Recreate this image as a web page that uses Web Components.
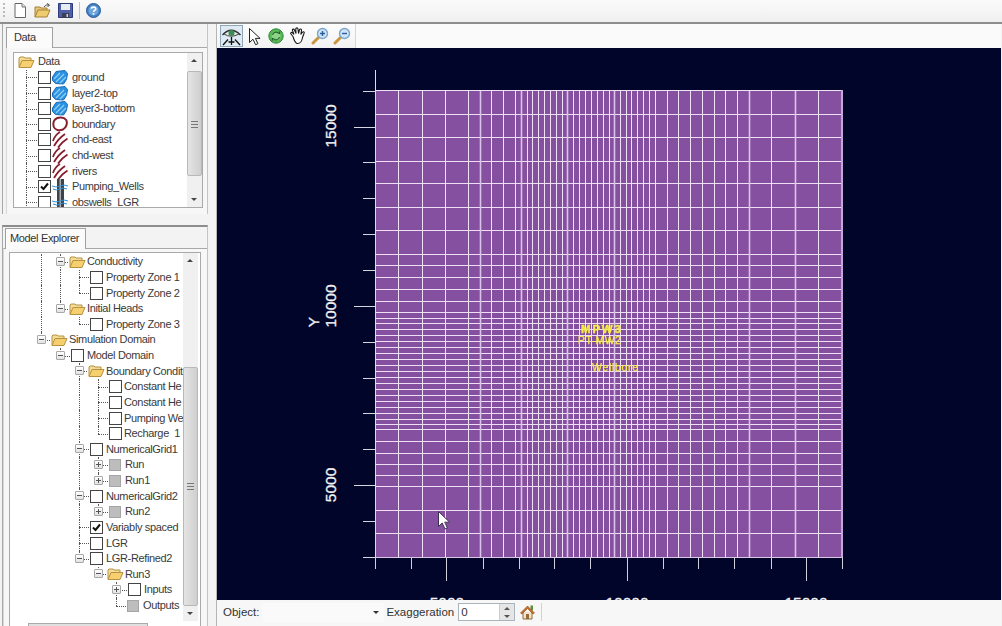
<!DOCTYPE html>
<html>
<head>
<meta charset="utf-8">
<style>
  html, body { margin: 0; height: 100%; overflow: hidden; background: #f3f3f3; }
  body { font: 11px "Liberation Sans", Arial, sans-serif; letter-spacing: -.35px; color: #3a3a3a; }
</style>
</head>
<body>
<app-shell>
  <main-toolbar slot="top"></main-toolbar>

  <side-pane slot="left" label="Data" style="--h:190px;--pt:3px;--tab-x:3px;--tab-pad:0 16px 0 7px;--body-x:3px;--pad:4px 4px 4px 6px;--bt:0">
    <tree-view style="--tree-h:156px;--bar-r:0px;--thumb-top:18px;--thumb-h:105px;--grip:49px">
      <tree-row at="4" gap="3" kind="folder">Data</tree-row>
      <tree-row line="12" at="24" kind="check" icon="blob">ground</tree-row>
      <tree-row line="12" at="24" kind="check" icon="blob">layer2-top</tree-row>
      <tree-row line="12" at="24" kind="check" icon="blob">layer3-bottom</tree-row>
      <tree-row line="12" at="24" kind="check" icon="ring">boundary</tree-row>
      <tree-row line="12" at="24" kind="check" icon="hatch">chd-east</tree-row>
      <tree-row line="12" at="24" kind="check" icon="hatch">chd-west</tree-row>
      <tree-row line="12" at="24" kind="check" icon="hatch">rivers</tree-row>
      <tree-row line="12" at="24" kind="checked" icon="well">Pumping_Wells</tree-row>
      <tree-row line="12" at="24" kind="check" icon="well">obswells_LGR</tree-row>
    </tree-view>
  </side-pane>

  <side-pane slot="left" label="Model Explorer" style="--h:401px;--pt:1px;--tab-x:2px;--tab-pad:0 6px 0 4px;--body-x:0px;--pad:3px 6px 0 5px;--bt:2px;margin-top:11px">
    <tree-view hbar style="--tree-h:375px;--bar-r:2px;--thumb-top:114px;--thumb-h:239px;--grip:115px">
      <tree-row guides="31" line="50" exp="-" at="59" kind="folder">Conductivity</tree-row>
      <tree-row guides="31 50" line="69" at="80" kind="check">Property Zone 1</tree-row>
      <tree-row guides="31 50" line="69" last at="80" kind="check">Property Zone 2</tree-row>
      <tree-row guides="31" line="50" last exp="-" at="59" kind="folder">Initial Heads</tree-row>
      <tree-row guides="31" line="69" last at="80" kind="check">Property Zone 3</tree-row>
      <tree-row line="31" last exp="-" at="41" kind="folder">Simulation Domain</tree-row>
      <tree-row line="50" last exp="-" at="61" kind="check">Model Domain</tree-row>
      <tree-row line="69" exp="-" at="78" kind="folder">Boundary Condit</tree-row>
      <tree-row guides="69" line="88" at="99" gap="2" kind="check">Constant He</tree-row>
      <tree-row guides="69" line="88" at="99" gap="2" kind="check">Constant He</tree-row>
      <tree-row guides="69" line="88" at="99" gap="2" kind="check">Pumping We</tree-row>
      <tree-row guides="69" line="88" last at="99" gap="2" kind="check">Recharge&nbsp; 1</tree-row>
      <tree-row line="69" exp="-" at="80" kind="check">NumericalGrid1</tree-row>
      <tree-row guides="69" line="88" exp="+" at="99" kind="grey">Run</tree-row>
      <tree-row guides="69" line="88" last exp="+" at="99" kind="grey">Run1</tree-row>
      <tree-row line="69" exp="-" at="80" kind="check">NumericalGrid2</tree-row>
      <tree-row guides="69" line="88" last exp="+" at="99" kind="grey">Run2</tree-row>
      <tree-row line="69" at="80" kind="checked">Variably spaced</tree-row>
      <tree-row line="69" at="80" kind="check">LGR</tree-row>
      <tree-row line="69" last exp="-" at="80" kind="check">LGR-Refined2</tree-row>
      <tree-row line="88" last exp="-" at="97" kind="folder">Run3</tree-row>
      <tree-row line="106" exp="+" at="118" kind="check">Inputs</tree-row>
      <tree-row line="106" last at="117" kind="grey">Outputs</tree-row>
    </tree-view>
  </side-pane>

  <plot-toolbar slot="main"></plot-toolbar>
  <plot-canvas slot="main"></plot-canvas>
  <status-bar slot="main"></status-bar>
</app-shell>

<script>
// shared little icons
const ICONS = {
  folder: `<svg width="17" height="14" viewBox="0 0 17 14"><path d="M1 12V3l1-1h4l1 1h6v2" fill="#f3dc9a" stroke="#b8913f"/><path d="M1 12.500L4 5.500h12l-3 7z" fill="#f6cf6e" stroke="#b8913f"/></svg>`,
  blob: `<svg width="16" height="15" viewBox="0 0 16 15"><path d="M.5 7L4 1.500 13 .5l2.500 3-1 6-3 4.500-8-.5-3-3z" fill="#2a92e0" stroke="#1a6cb8"/><path d="M2 9l6-6M4 12l8-8M8 13l6-6" stroke="#8fd0f5" stroke-width="1.200" fill="none"/></svg>`,
  ring: `<svg width="16" height="16" viewBox="0 0 16 16"><path d="M3 3.500C6 .5 12 1 14.200 4c1.500 3 .3 7.500-3.200 9.500C7 15 3 14 1.800 11 1 8 1.500 5 3 3.500z" fill="#fff" stroke="#86202f" stroke-width="2"/></svg>`,
  hatch: `<svg width="16" height="17" viewBox="0 0 16 17"><g fill="none" stroke="#86202f" stroke-width="1.800"><path d="M1 10Q3 4 8 1"/><path d="M2 15Q6 8 13 3"/><path d="M6 16.500Q10 11 15.500 7.500"/></g></svg>`,
  well: `<svg width="16" height="16" viewBox="0 0 16 16"><rect x="5" y="0" width="7" height="16" fill="#3f4347"/><rect x="7.500" y="0" width="1.500" height="16" fill="#a8adb1"/><path d="M0 7q4 2 8 0t8 0M1 10q4 2 7 0t7 0" stroke="#2c8fd8" fill="none"/></svg>`
};

const shellTemplate = document.createElement('template');
shellTemplate.innerHTML = `
  <style>
    :host { display: grid; grid-template-rows: 24px 602px; height: 626px; width: 1002px; overflow: hidden; }
    .work { display: flex; min-height: 0; }
    .left { flex: 0 0 216px; box-sizing: border-box; padding-left: 2px; display: flex; flex-direction: column; overflow: hidden; }
    .main { flex: 0 0 785px; border-left: 1px solid #b5b5b5; box-sizing: border-box; display: flex; flex-direction: column; overflow: hidden; }
  </style>
  <slot name="top"></slot>
  <div class="work">
    <div class="left"><slot name="left"></slot></div>
    <div class="main"><slot name="main"></slot></div>
  </div>`;
class AppShell extends HTMLElement {
  constructor() {
    super();
    this.attachShadow({ mode: 'open' }).appendChild(shellTemplate.content.cloneNode(true));
  }
}

const mainToolbarTemplate = document.createElement('template');
mainToolbarTemplate.innerHTML = `
  <style>
    :host { display: flex; align-items: center; box-sizing: border-box; height: 24px; padding: 0 0 2px 3px; background: linear-gradient(#fbfbfb, #efefef); border-bottom: 2px solid #8d8d8d; }
    .grip { width: 2px; height: 14px; border-left: 2px dotted #bbb; margin-right: 7px; }
    svg { display: block; }
    .sep { width: 1px; height: 17px; background: #c4c4c4; margin: 0 6px 0 6px; }
  </style>
  <div class="grip"></div>
  <svg width="12" height="15" viewBox="0 0 12 15" style="margin-right:8px"><path d="M1 .5h7l3.500 3.500v10.500H1z" fill="#fff" stroke="#666"/><path d="M8 .5V4h3.500" fill="#e4e4e4" stroke="#777"/></svg>
  <svg width="17" height="15" viewBox="0 0 17 15" style="margin-right:7px"><path d="M1 14V4h5l1 1h6v2" fill="#e2c47a" stroke="#a58238"/><path d="M1 14L4 7h12l-3 7z" fill="#efcb70" stroke="#a58238"/><path d="M10 4Q12 1 15 2M13 .5L15.500 2 13.500 4" fill="none" stroke="#4d4d4d"/></svg>
  <svg width="15" height="15" viewBox="0 0 15 15"><path d="M.5.5h14v14h-14z" fill="#4f5fa8" stroke="#2e3a78"/><rect x="3" y="1" width="9" height="6" fill="#e8ecf5"/><rect x="4" y="10" width="7" height="5" fill="#3a3f58"/><rect x="8.500" y="11" width="1.500" height="3" fill="#cfd3e2"/></svg>
  <div class="sep"></div>
  <svg width="15" height="15" viewBox="0 0 15 15"><circle cx="7.500" cy="7.500" r="7" fill="#3f7fc4" stroke="#2a5c9c"/><circle cx="7.500" cy="7.500" r="5" fill="#6ea6dc"/><path d="M5.300 5.800C5.500 3.500 9.800 3.500 9.800 5.800 9.800 7.500 7.500 7.300 7.500 9" fill="none" stroke="#fff" stroke-width="1.600"/><rect x="6.700" y="10" width="1.600" height="1.600" fill="#fff"/></svg>`;
class MainToolbar extends HTMLElement {
  constructor() {
    super();
    this.attachShadow({ mode: 'open' }).appendChild(mainToolbarTemplate.content.cloneNode(true));
  }
}

const sidePaneTemplate = document.createElement('template');
sidePaneTemplate.innerHTML = `
  <style>
    :host { display: block; box-sizing: border-box; flex: none; width: 206px; height: var(--h); padding-top: var(--pt); border-left: 1px solid #a8a8a8; border-right: 1px solid #c4c4c4; border-top: var(--bt) solid #8d8d8d; overflow: hidden; }
    .tab { display: inline-block; box-sizing: border-box; height: 21px; line-height: 18px; padding: var(--tab-pad); margin-left: var(--tab-x); background: #fbfbfb; border: 1px solid #a0a0a0; border-bottom: 0; position: relative; z-index: 1; color: #333; vertical-align: top; }
    .body { margin: -1px 0 0 var(--body-x); border-top: 1px solid #a8a8a8; border-left: 1px solid #d8d8d8; padding: var(--pad); background: #f7f7f7; height: 100%; box-sizing: border-box; }
  </style>
  <span class="tab"></span>
  <div class="body"><slot></slot></div>`;
class SidePane extends HTMLElement {
  constructor() {
    super();
    this.attachShadow({ mode: 'open' }).appendChild(sidePaneTemplate.content.cloneNode(true));
  }
  connectedCallback() {
    this.shadowRoot.querySelector('.tab').textContent = this.getAttribute('label');
  }
}

const treeViewTemplate = document.createElement('template');
treeViewTemplate.innerHTML = `
  <style>
    :host { display: flex; box-sizing: border-box; height: var(--tree-h); border: 1px solid #a9a9a9; background: #fff; position: relative; overflow: hidden; }
    .rows { flex: 1; min-width: 0; padding-top: 1px; overflow: hidden; }
    .bar { flex: 0 0 15px; margin-right: var(--bar-r); background: #f0f0f0; position: relative; }
    .arrow { position: absolute; left: 4px; width: 0; height: 0; border: 3.500px solid transparent; }
    .up { top: 6px; border-bottom-color: #444; border-top: 0; }
    .down { bottom: 6px; border-top-color: #444; border-bottom: 0; }
    .thumb { position: absolute; left: 0; right: 0; top: var(--thumb-top); height: var(--thumb-h); box-sizing: border-box; background: linear-gradient(90deg, #e4e4e4, #cfcfcf); border: 1px solid #b8b8b8; border-radius: 2px; }
    .grip { position: absolute; left: 3px; right: 3px; top: var(--grip); height: 7px; box-sizing: border-box; border-top: 1px solid #777; border-bottom: 1px solid #777; }
    .grip::after { content: ""; display: block; height: 1px; margin-top: 2px; background: #777; }
    .hthumb { display: none; position: absolute; left: 18px; width: 118px; bottom: 0; height: 2px; background: #e0e0e0; border: 1px solid #aaa; border-bottom: 0; }
    :host([hbar]) .hthumb { display: block; }
    :host([hbar]) .bar { margin-bottom: 5px; }
  </style>
  <div class="rows"><slot></slot></div>
  <div class="bar"><i class="arrow up"></i><div class="thumb"><div class="grip"></div></div><i class="arrow down"></i></div>
  <div class="hthumb"></div>`;
class TreeView extends HTMLElement {
  constructor() {
    super();
    this.attachShadow({ mode: 'open' }).appendChild(treeViewTemplate.content.cloneNode(true));
  }
}

const treeRowTemplate = document.createElement('template');
treeRowTemplate.innerHTML = `
  <style>
    :host { display: flex; align-items: center; height: 15.64px; position: relative; white-space: nowrap; color: #3a3a3a; }
    .g, .v, .h, .exp { position: absolute; }
    .g, .v { width: 0; border-left: 1px dotted #555; top: 0; bottom: 0; }
    .v.last { bottom: 50%; }
    .h { top: 50%; height: 0; border-top: 1px dotted #555; }
    .exp { top: 50%; margin-top: -5px; width: 9px; height: 9px; box-sizing: border-box; border: 1px solid #a8a8a8; border-radius: 1px; background: linear-gradient(#fff, #e2e2e2); text-align: center; }
    .exp::before { content: ""; position: absolute; left: 1px; right: 1px; top: 3px; height: 1px; background: #555; }
    .exp.plus::after { content: ""; position: absolute; top: 1px; bottom: 1px; left: 3px; width: 1px; background: #555; }
    .box { flex: none; width: 13px; height: 13px; box-sizing: border-box; border: 1px solid #444; background: #fff; position: relative; }
    .box svg { position: absolute; left: 0; top: 0; }
    .grey { flex: none; width: 12px; height: 12px; box-sizing: border-box; border: 1px solid #a5a5a5; background: #bdbdbd; }
    .ic { flex: none; display: block; line-height: 0; }
    .label { position: relative; top: -.5px; }
  </style>`;
class TreeRow extends HTMLElement {
  connectedCallback() {
    if (this.shadowRoot) return;
    const shadow = this.attachShadow({ mode: 'open' });
    shadow.appendChild(treeRowTemplate.content.cloneNode(true));
    const at = +this.getAttribute('at');
    const kind = this.getAttribute('kind');
    const icon = this.getAttribute('icon');
    const exp = this.getAttribute('exp');
    this.style.paddingLeft = at + 'px';
    let html = '';
    (this.getAttribute('guides') || '').split(' ').filter(Boolean).forEach(x => {
      html += `<i class="g" style="left:${x}px"></i>`;
    });
    if (this.hasAttribute('line')) {
      const x = +this.getAttribute('line');
      html += `<i class="v${this.hasAttribute('last') ? ' last' : ''}" style="left:${x}px"></i>`;
      html += `<i class="h" style="left:${x}px;width:${at - x - 1}px"></i>`;
      if (exp) html += `<i class="exp${exp === '+' ? ' plus' : ''}" style="left:${x - 4}px"></i>`;
    }
    let labelGap = 3;
    if (kind === 'folder') { html += `<span class="ic">${ICONS.folder}</span>`; labelGap = 1; }
    if (kind === 'check') html += `<span class="box"></span>`;
    if (kind === 'checked') html += `<span class="box"><svg width="11" height="11" viewBox="0 0 11 11"><path d="M2 5.500L4.500 8 9 2.500" fill="none" stroke="#111" stroke-width="2"/></svg></span>`;
    if (kind === 'grey') { html += `<span class="grey"></span>`; labelGap = 4; }
    if (icon) { html += `<span class="ic" style="margin-left:1px">${ICONS[icon]}</span>`; labelGap = 4; }
    if (this.hasAttribute('gap')) labelGap = +this.getAttribute('gap');
    html += `<span class="label" style="margin-left:${labelGap}px"><slot></slot></span>`;
    shadow.innerHTML += html;
  }
}

const plotToolbarTemplate = document.createElement('template');
plotToolbarTemplate.innerHTML = `
  <style>
    :host { display: flex; flex: none; height: 24px; background: #fafafa; }
    .tools { display: flex; align-items: center; width: 139px; box-sizing: border-box; padding-left: 3px; border-right: 1px solid #d6d6d6; background: linear-gradient(#fdfdfd, #f2f2f2); }
    .on { display: flex; align-items: center; justify-content: center; width: 23px; height: 22px; box-sizing: border-box; border: 1px solid #8fa6b8; background: #dfeaf3; }
    .t { display: flex; align-items: center; justify-content: center; width: 22px; height: 22px; }
  </style>
  <div class="tools">
    <div class="on"><svg width="21" height="19" viewBox="0 0 21 19"><path d="M1.500 8Q10 -1.500 19.500 8" fill="none" stroke="#333" stroke-width="1.400"/><path d="M3 7Q10 11.500 18 7" fill="#dfe8e0" stroke="#444"/><circle cx="10.500" cy="6" r="3" fill="#3d8a52"/><path d="M2 18L7 12.500M19 18L14 12.500M10.500 10v8M7.500 15h6" fill="none" stroke="#111" stroke-width="1.300"/></svg></div>
    <div class="t"><svg width="15" height="19" viewBox="0 0 15 19"><path d="M2.500 1.500v14l3.500-3.300 2.600 5.500 2.300-1-2.500-5.300h4.700z" fill="#fff" stroke="#222"/></svg></div>
    <div class="t"><svg width="16" height="16" viewBox="0 0 16 16"><circle cx="8" cy="8" r="7.200" fill="#58b558" stroke="#2d8a36"/><circle cx="8" cy="8" r="4.500" fill="#8ed488"/><path d="M4.500 7A3.700 3.700 0 0 1 11 5.500M9.500 4.800l2 .8.3-2.200M11.500 9A3.700 3.700 0 0 1 5 10.500M6.500 11.200l-2-.8-.3 2.200" fill="none" stroke="#1d5f28" stroke-width="1.100"/></svg></div>
    <div class="t"><svg width="18" height="18" viewBox="0 0 18 18"><path d="M4 9.500L2 7C1 6 2.500 4.800 3.500 5.800L5 7.500 3.500 3.500C3 2 5 1.500 5.500 3L7 6.500 6.800 2C6.800 .5 8.800 .5 9 2L9.500 6.500 10.500 2.800C11 1.500 12.800 2 12.500 3.300L11.800 7.500 13.500 5.200C14.500 4.200 15.800 5.300 15 6.500L13.500 10.500C13 14 11.500 16.500 8.500 16.500 6 16.500 5 13 4 9.500z" fill="#fff" stroke="#1a1a1a" stroke-width="1.100"/></svg></div>
    <div class="t"><svg width="18" height="18" viewBox="0 0 18 18"><path d="M7.500 10.500L2 16" stroke="#c9963f" stroke-width="3" stroke-linecap="round"/><circle cx="11.500" cy="6.500" r="5" fill="#cfe3f5" stroke="#7ca5cb" stroke-width="1.400"/><path d="M9 6.500h5M11.500 4v5" stroke="#2a5f9c" stroke-width="1.400"/></svg></div>
    <div class="t"><svg width="18" height="18" viewBox="0 0 18 18"><path d="M7.500 10.500L2 16" stroke="#c9963f" stroke-width="3" stroke-linecap="round"/><circle cx="11.500" cy="6.500" r="5" fill="#cfe3f5" stroke="#7ca5cb" stroke-width="1.400"/><path d="M9 6.500h5" stroke="#2a5f9c" stroke-width="1.400"/></svg></div>
  </div>`;
class PlotToolbar extends HTMLElement {
  constructor() {
    super();
    this.attachShadow({ mode: 'open' }).appendChild(plotToolbarTemplate.content.cloneNode(true));
  }
}

// grid line places read off the model picture
const GRID_X = [398.3,422,445.3,467.7,480,491.3,503.3,514.7,520.7,526.7,532.3,538.3,544,550,555.7,561.7,567.3,573.3,579,585,591,597,603,608.7,613.7,619.7,625.7,631.3,637.3,643,649,654.7,666.7,678.3,690.3,702,714,725.3,737.3,748.7,771,794.7,818.3];
const GRID_Y = [113.7,137.3,160.7,183.3,206.7,230.3,253.7,265.3,277.3,289,300.7,312.3,318.3,323.3,329.3,335.3,341.3,347.3,353.3,359.3,364.7,370.7,376.7,382.7,388.7,394.7,400.7,406.7,412.7,418.7,424.3,429,440.7,452.7,464.3,475,486.3,510,533.3];
const WIDE_X = [480,520.7,567.3,613.7,748.7,794.7];
const TICKS_Y = [90.7,126.7,162,198,234,269.5,305.5,341.7,377.7,413,449,485.3,521,557];
const MAJOR_Y = [126.7,305.5,485.3];
const TICKS_X = [375.3,411.3,446.3,482.7,519,554.3,590.3,626.7,663,698,734.3,770.7,805.7,842];
const MAJOR_X = [446.3,626.7,805.7];

class PlotCanvas extends HTMLElement {
  constructor() {
    super();
    const line = (x1, y1, x2, y2, c, w) => `<line x1="${x1}" y1="${y1}" x2="${x2}" y2="${y2}" stroke="${c}" stroke-width="${w || 1}"/>`;
    const px = v => Math.round(v) + 0.5;
    let g = `<rect x="375" y="90" width="467" height="467" fill="#84509f"/>`;
    GRID_Y.forEach(y => { g += line(375, px(y), 842, px(y), '#eedff4'); });
    GRID_X.forEach(x => {
      g += WIDE_X.includes(x) ? line(px(x), 90, px(x), 557, '#dcc3ea', 1.6) : line(px(x), 90, px(x), 557, '#f0e2f6');
    });
    g += line(375, 90.5, 842, 90.5, '#f0e2f5') + line(375, 557.5, 842, 557.5, '#dcc6e8') + line(842, 90, 842, 558, '#c5a8d8', 2);
    g += line(375.5, 70, 375.5, 558, '#dcdce6');
    TICKS_Y.forEach(y => { g += line(MAJOR_Y.includes(y) ? 354 : 363, px(y), 375, px(y), '#d6d6e2'); });
    TICKS_X.forEach(x => { g += line(px(x), 557, px(x), MAJOR_X.includes(x) ? 581 : 569, '#d0d0dc'); });
    const yLabel = (t, y) => `<text transform="translate(336 ${y}) rotate(-90)" text-anchor="middle">${t}</text>`;
    const xLabel = (t, x) => `<text x="${x}" y="608" text-anchor="middle">${t}</text>`;
    this.attachShadow({ mode: 'open' }).innerHTML = `
      <style>
        :host { display: block; flex: none; height: 552px; background: #01052a; overflow: hidden; }
        svg { display: block; }
        .axis { font: 15.5px "Liberation Sans", Arial, sans-serif; letter-spacing: 0; fill: #f2f2f2; stroke: #f2f2f2; stroke-width: .3px; }
        .well { font: 10.500px "Liberation Sans", Arial, sans-serif; fill: #f6ea4a; stroke: #f6ea4a; stroke-width: .25px; filter: blur(.25px); }
      </style>
      <svg width="784" height="552" viewBox="217 48 784 552">
        ${g}
        <g class="axis">
          ${yLabel('15000', 126)}${yLabel('10000', 306)}${yLabel('5000', 485)}
          <text transform="translate(319 322) rotate(-90)" text-anchor="middle">Y</text>
          ${xLabel('5000', 447)}${xLabel('10000', 627)}${xLabel('15000', 806)}
        </g>
        <g class="well">
          <text x="581" y="333" style="font-weight:bold;font-size:11.500px;letter-spacing:1.800px;stroke-width:.4px">MPW3</text>
          <text x="578" y="344" style="letter-spacing:.4px">PT-MW2</text>
          <text x="592" y="371" style="letter-spacing:.7px">Wellbore</text>
        </g>
        <path d="M438.500 511.500v15l3.700-3.500 2.800 6 2.400-1-2.700-5.800h5z" fill="#fff" stroke="#3a3050"/>
      </svg>`;
  }
}

const statusBarTemplate = document.createElement('template');
statusBarTemplate.innerHTML = `
  <style>
    :host { display: flex; flex: none; align-items: center; box-sizing: border-box; height: 26px; padding: 0 0 2px 6px; background: #f7f7f7; font-size: 11.5px; letter-spacing: 0; color: #333; }
    .combo { display: flex; align-items: center; justify-content: flex-end; width: 122px; height: 19px; margin-left: 3px; padding-right: 5px; box-sizing: border-box; background: #fafafa; }
    .combo i { width: 0; height: 0; border: 3px solid transparent; border-top: 3.500px solid #333; border-bottom: 0; }
    .spin { display: flex; align-items: center; justify-content: space-between; width: 57px; height: 18px; margin-left: 4px; box-sizing: border-box; border: 1px solid #a8b4c0; background: #fff; padding-left: 2px; }
    .btns { display: flex; flex-direction: column; width: 14px; height: 16px; background: #e6e6e6; border-left: 1px solid #ccc; align-items: center; justify-content: space-around; }
    .btns i { width: 0; height: 0; border: 3px solid transparent; }
    .btns .u { border-bottom: 3px solid #555; border-top: 0; }
    .btns .d { border-top: 3px solid #555; border-bottom: 0; }
    svg { margin-left: 5px; display: block; }
    .sep { width: 1px; height: 18px; background: #d2d2d2; margin-left: 6px; }
  </style>
  <span>Object:</span>
  <div class="combo"><i></i></div>
  <span style="margin-left:2px">Exaggeration</span>
  <div class="spin"><span>0</span><div class="btns"><i class="u"></i><i class="d"></i></div></div>
  <svg width="15" height="16" viewBox="0 0 15 16"><path d="M3 8v7h9V8" fill="#f2e5cf" stroke="#8a6a3c"/><rect x="6" y="10" width="3" height="5" fill="#9a6a34"/><rect x="10.500" y="1.500" width="2.500" height="5" fill="#5b8f3a"/><path d="M.5 9L7.500 2l7 7-1.500 1-5.500-5.500L2 10z" fill="#c9702c" stroke="#8f4a18" stroke-width=".6"/></svg>
  <div class="sep"></div>`;
class StatusBar extends HTMLElement {
  constructor() {
    super();
    this.attachShadow({ mode: 'open' }).appendChild(statusBarTemplate.content.cloneNode(true));
  }
}

customElements.define('app-shell', AppShell);
customElements.define('main-toolbar', MainToolbar);
customElements.define('side-pane', SidePane);
customElements.define('tree-view', TreeView);
customElements.define('tree-row', TreeRow);
customElements.define('plot-toolbar', PlotToolbar);
customElements.define('plot-canvas', PlotCanvas);
customElements.define('status-bar', StatusBar);
</script>
</body>
</html>
